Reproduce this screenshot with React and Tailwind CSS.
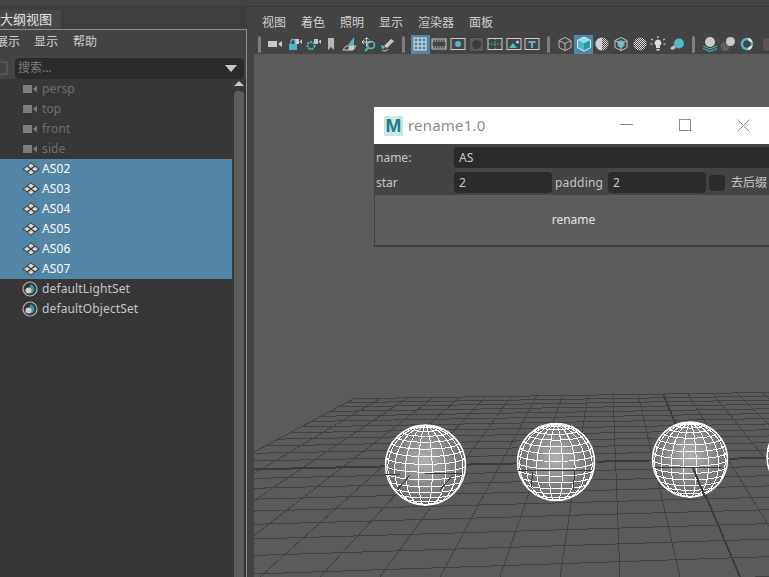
import React from "react";

const sans = "font-['Noto_Sans','Noto_Sans_CJK_SC',sans-serif]";

// perspective grid helpers, numbers read off the screenshot
const HZ = 263;
const VX = 608;
const FAR = 9478;
const rowH = (j) => 1 / (0.00504 - 0.000212 * j);
const crossing = (k, j) => {
  const a = (740 + 60 * k - VX) / (577 - HZ);
  const b = rowH(j) / (FAR - VX);
  const y = rowH(j) / (1 + a * b);
  return [VX + a * y, HZ + y];
};
const range = (from, to) => Array.from({ length: to - from + 1 }, (_, i) => from + i);

const Grid = () => {
  const cols = range(-12, 12);
  const rows = range(-12, 10);
  return (
    <g shapeRendering="crispEdges">
      {cols.map((k) => {
        const [x1, y1] = crossing(k, -12);
        const [x2, y2] = crossing(k, 10);
        return <line key={k} x1={x1} y1={y1} x2={x2} y2={y2} stroke={k === 0 ? "#3c3c3c" : "#424242"} strokeWidth={k === 0 ? 2 : 1} />;
      })}
      {rows.map((j) => {
        const [x1, y1] = crossing(-12, j);
        const [x2, y2] = crossing(12, j);
        return <line key={j} x1={x1} y1={y1} x2={x2} y2={y2} stroke={j === 0 ? "#3c3c3c" : "#424242"} strokeWidth={j === 0 ? 2 : 1} />;
      })}
    </g>
  );
};

const wirePath = (cx, cy, r) => {
  const tilt = 0.18;
  const pt = (lat, lon) => {
    const x = Math.cos(lat) * Math.sin(lon);
    const y = Math.sin(lat);
    const z = Math.cos(lat) * Math.cos(lon);
    return {
      sx: cx + r * x,
      sy: cy - r * (y * Math.cos(tilt) - z * Math.sin(tilt)),
      front: y * Math.sin(tilt) + z * Math.cos(tilt) >= -0.01,
    };
  };
  let d = "";
  const trace = (fn, steps) => {
    let pen = false;
    for (let i = 0; i <= steps; i++) {
      const p = fn(i / steps);
      if (!p.front) {
        pen = false;
        continue;
      }
      d += `${pen ? "L" : "M"}${p.sx.toFixed(1)} ${p.sy.toFixed(1)}`;
      pen = true;
    }
  };
  for (let a = -7; a <= 7; a++) {
    const lat = (a * Math.PI) / 16;
    trace((t) => pt(lat, t * Math.PI * 2), 72);
  }
  for (let b = 0; b < 18; b++) {
    const lon = (b * Math.PI) / 9 + 0.17;
    trace((t) => pt(-Math.PI / 2 + t * Math.PI, lon), 40);
  }
  return d;
};

const Sphere = ({ cx, cy, r }) => (
  <g>
    <circle cx={cx} cy={cy} r={r} fill="url(#sphereShade)" />
    <path d={wirePath(cx, cy, r)} fill="none" stroke="#fff" strokeWidth="1" shapeRendering="crispEdges" />
    <circle cx={cx} cy={cy} r={r} fill="none" stroke="#fff" strokeWidth="1.5" />
  </g>
);

const Viewport = () => (
  <svg className="w-full h-full block" viewBox="254 54 515 523">
    <defs>
      <radialGradient id="sphereShade" cx="50%" cy="45%" r="55%">
        <stop offset="0%" stopColor="#b2b2b2" />
        <stop offset="100%" stopColor="#666" />
      </radialGradient>
    </defs>
    <Grid />
    <Sphere cx={425.5} cy={465} r={40} />
    <Sphere cx={556} cy={462} r={38.5} />
    <Sphere cx={690} cy={459.5} r={37.5} />
    <Sphere cx={804} cy={457} r={37} />
    <g stroke="#3a3a3a" fill="none" shapeRendering="crispEdges">
      <path d="M385 474H400M425 474L463 473M410 475L397 490M453 475L440 490" />
      <path d="M518 471L593 470M533 472L531 487M575 470L573 490" />
      <path d="M655 468L723 467" />
      <path d="M693 468L705 497" strokeWidth="2" />
    </g>
  </svg>
);

const Icon = ({ children, box = 16 }) => (
  <svg width={box} height={box} viewBox="0 0 16 16">{children}</svg>
);

const teal = "#4fb8c8";
const light = "#c9c9c9";

const CamGlyph = ({ fill = light }) => <path d="M1 5h9v6H1zM11 8l4-3v6z" fill={fill} />;

const Tools = {
  cam: () => <Icon><CamGlyph /></Icon>,
  lock: () => (
    <Icon>
      <path d="M9 3h4v5H9zM13.500 5.500L16 3.500v4.500z" fill={light} />
      <path d="M3 8h8v6H3z" fill={teal} />
      <path d="M5 8V5.500a2 2 0 0 1 4 0V8" fill="none" stroke={teal} strokeWidth="1.300" />
    </Icon>
  ),
  film: () => (
    <Icon>
      <path d="M9 3h4v5H9zM13.500 5.500L16 3.500v4.500z" fill={light} />
      <circle cx="6" cy="9.500" r="3.500" fill="none" stroke={teal} strokeWidth="2" strokeDasharray="2 1" />
    </Icon>
  ),
  mark: () => <Icon><path d="M5 2h6v12l-3-3-3 3z" fill="#b5b5b5" /></Icon>,
  plane: () => (
    <Icon>
      <path d="M6 9L12 1v8z" fill={teal} />
      <path d="M1 14l3-4h10l-3 4z" fill="none" stroke={light} strokeWidth="1" />
      <path d="M7 10l5-1v5H6z" fill={light} />
    </Icon>
  ),
  pan: () => (
    <Icon>
      <circle cx="10" cy="9" r="3.500" fill="none" stroke={teal} strokeWidth="1.600" />
      <path d="M7.500 11.500L4 15" stroke={teal} strokeWidth="2" />
      <path d="M1 6h9M5.500 1.500v9M3 4L1 6l2 2M3.500 3.500l2-2 2 2" fill="none" stroke={light} strokeWidth="1" />
    </Icon>
  ),
  pencil: () => (
    <Icon>
      <path d="M5 10l7-7 3 2-7 7z" fill={light} />
      <path d="M2 9l3 1 1 2-3 1z" fill={teal} />
      <path d="M3 14a4 4 0 0 0 6-1" fill="none" stroke={light} strokeWidth="1" />
    </Icon>
  ),
  grid: () => (
    <Icon>
      <rect x="2" y="2" width="12" height="12" fill="none" stroke="#e6e6e6" />
      <path d="M6 2v12M10 2v12M2 6h12M2 10h12" stroke="#e6e6e6" strokeWidth="1" />
    </Icon>
  ),
  gate: () => (
    <Icon>
      <rect x="1" y="3" width="14" height="10" fill="none" stroke={light} />
      <path d="M1 5h14M1 11h14" stroke={light} strokeDasharray="1.500 1" />
    </Icon>
  ),
  dot: () => (
    <Icon>
      <rect x="1" y="2.500" width="14" height="11" fill="none" stroke={light} />
      <circle cx="8" cy="8" r="3" fill={teal} />
    </Icon>
  ),
  dark: () => (
    <div className="w-[15px] h-[15px] bg-[#5a5a5a] border border-[#3c3c3c] flex items-center justify-center">
      <div className="w-[9px] h-[9px] rounded-full bg-[#3a3a3a]" />
    </div>
  ),
  safe: () => (
    <Icon>
      <rect x="1" y="2.500" width="14" height="11" fill="none" stroke={light} />
      <path d="M1 8h14M8 2.500v11" stroke={teal} strokeDasharray="1.500 1.500" />
    </Icon>
  ),
  pic: () => (
    <Icon>
      <rect x="1" y="2.500" width="14" height="11" fill="none" stroke={light} />
      <path d="M3 12l4-5 4 5z" fill={teal} />
      <circle cx="11.500" cy="6" r="1.500" fill={light} />
    </Icon>
  ),
  text: () => (
    <Icon>
      <rect x="1" y="2.500" width="14" height="11" fill="none" stroke={light} />
      <path d="M4.500 5h7v2h-2.500v5h-2v-5H4.500z" fill={teal} />
    </Icon>
  ),
  cube: () => (
    <Icon>
      <path d="M8 1.500l6 3v7l-6 3-6-3v-7zM2 4.500l6 3 6-3M8 7.500v7" fill="none" stroke="#b8b8b8" />
    </Icon>
  ),
  solid: () => (
    <Icon>
      <path d="M8 1l6.500 3.200L8 7.500 1.500 4.200z" fill="#8adfe8" />
      <path d="M1.500 4.200L8 7.500V15L1.500 11.800z" fill="#4fb8c8" />
      <path d="M14.500 4.200L8 7.500V15l6.500-3.200z" fill="#2f98aa" />
      <path d="M8 1l6.500 3.200v7.600L8 15l-6.500-3.200V4.200z" fill="none" stroke="#d5eef2" />
    </Icon>
  ),
  half: () => (
    <Icon>
      <defs>
        <pattern id="chk" width="2" height="2" patternUnits="userSpaceOnUse">
          <rect width="2" height="2" fill="#444" />
          <rect width="1" height="1" fill="#ddd" />
          <rect x="1" y="1" width="1" height="1" fill="#ddd" />
        </pattern>
      </defs>
      <circle cx="8" cy="8" r="6.500" fill="url(#chk)" />
      <path d="M8 1.500a6.500 6.500 0 0 0 0 13z" fill="#cfcfcf" />
    </Icon>
  ),
  tcube: () => (
    <Icon>
      <path d="M8 1.500l6 3v7l-6 3-6-3v-7z" fill="none" stroke="#c5c5c5" />
      <path d="M8 4l3.500 1.800v4.400L8 12l-3.500-1.800V5.800z" fill={teal} />
      <path d="M2 4.500l6 3 6-3M8 7.500v7" fill="none" stroke="#c5c5c5" />
    </Icon>
  ),
  checker: () => (
    <Icon>
      <circle cx="8" cy="8" r="6.500" fill="url(#chk)" />
    </Icon>
  ),
  bulb: () => (
    <Icon>
      <path d="M8 3.500a3.500 3.500 0 0 1 2 6.300V12H6V9.800a3.500 3.500 0 0 1 2-6.300zM6.500 13h3v1.500h-3z" fill="#dedede" />
      <path d="M8 0v2M1 3l2 1M15 3l-2 1M0.500 8h2M13.500 8h2" stroke="#dedede" />
    </Icon>
  ),
  lit: () => (
    <Icon>
      <circle cx="10" cy="7.500" r="5" fill={teal} />
      <path d="M1 12l4-3 2 3-4 2z" fill="#bdbdbd" />
    </Icon>
  ),
  layered: () => (
    <Icon>
      <circle cx="8" cy="6" r="5" fill="#c9c9c9" />
      <path d="M1 10l7 3 7-3M1 12.500l7 3 7-3" fill="none" stroke={teal} />
    </Icon>
  ),
  pair: () => (
    <Icon>
      <circle cx="5" cy="10.500" r="4.500" fill="#5f5f5f" />
      <circle cx="10.500" cy="5.500" r="4.500" fill="#c9c9c9" />
    </Icon>
  ),
  ring: () => (
    <Icon>
      <circle cx="8" cy="8" r="5" fill="none" stroke={teal} strokeWidth="2.400" />
      <path d="M9 3a5 5 0 0 1 3.500 3M12.500 10a5 5 0 0 1-3.500 3" fill="none" stroke="#e5e5e5" strokeWidth="2.400" />
    </Icon>
  ),
};

const Handle = () => (
  <div className="w-[14px] shrink-0 flex justify-center">
    <div className="w-[3px] h-[17px] rounded-sm bg-[#7d7d7d]" />
  </div>
);

const Slot = ({ name, active }) => {
  const Glyph = Tools[name];
  return (
    <div className={`w-[18.700px] h-[19px] shrink-0 flex items-center justify-center ${active ? "bg-[#5285a6]" : ""}`}>
      <Glyph />
    </div>
  );
};

const CubeSet = () => (
  <svg width="18" height="14" viewBox="0 0 18 14">
    <path d="M9 .5L17.500 7 9 13.500.5 7z" fill="#3a3a3a" />
    <path d="M9 1.500l3 2.300-3 2.500-3-2.500zM5 4.700L8 7 5 9.300 2 7zM13 4.700L16 7l-3 2.300L10 7zM9 7.700l3 2.500-3 2.300-3-2.300z" fill="#d4d4d4" />
  </svg>
);

const SetIcon = () => (
  <svg width="16" height="16" viewBox="0 0 16 16">
    <circle cx="8" cy="8" r="7" fill="none" stroke="#b5b5b5" strokeWidth="1.200" />
    <path d="M8 3.500a4.500 4.500 0 0 1 0 9z" fill="#2f98aa" />
    <circle cx="6.500" cy="9.500" r="3" fill="#cfcfcf" />
  </svg>
);

const CamIcon = () => (
  <svg width="16" height="12" viewBox="0 0 16 12">
    <path d="M1 2h9v8H1zM11 6l4-3.500v7z" fill="#7d7d7d" />
  </svg>
);

const Row = ({ icon, label, selected, dim }) => (
  <div className={`h-5 flex items-center text-[12px] tracking-[0.13px] ${selected ? "bg-[#5285a6] text-white" : dim ? "text-[#6e6e6e]" : "text-[#c4c4c4]"}`}>
    <div className="w-[22px] shrink-0" />
    <div className="w-[20px] shrink-0 flex justify-start">{icon}</div>
    <span>{label}</span>
  </div>
);

const Outliner = () => (
  <div className="w-[247px] shrink-0 flex flex-col h-full">
    <div className="h-[22px] pt-[3px] bg-[#3e3e3e] flex">
      <div className="w-[61px] bg-[#484848] text-[13px] leading-[19px] text-[#e0e0e0] whitespace-nowrap overflow-hidden">大纲视图</div>
    </div>
    <div className="flex-1 border-t border-r border-[#8c8c8c] flex flex-col min-h-0">
      <div className="h-[27px] pb-[4px] flex items-center text-[12px] text-[#cfcfcf] bg-[#444]">
        <span className="-ml-[4px] w-[38px]">展示</span>
        <span className="w-[39px]">显示</span>
        <span>帮助</span>
      </div>
      <div className="h-[22px] flex items-center bg-[#444] pr-[2px]">
        <div className="w-[15px] shrink-0 h-full flex items-center">
          <div className="w-[8px] h-[14px] border-y-2 border-r-2 border-[#555]" />
        </div>
        <div className="flex-1 h-[21px] rounded-sm bg-[#2b2b2b] flex items-center justify-between px-[3px] pr-[7px]">
          <span className="text-[12px] text-[#7d7d7d]">搜索...</span>
          <div className="w-0 h-0 border-x-[6px] border-x-transparent border-t-[7px] border-t-[#c8c8c8]" />
        </div>
      </div>
      <div className="flex-1 flex bg-[#373737] min-h-0">
        <div className="w-[232px] shrink-0">
          {["persp", "top", "front", "side"].map((n) => (
            <Row key={n} label={n} dim icon={<CamIcon />} />
          ))}
          {["AS02", "AS03", "AS04", "AS05", "AS06", "AS07"].map((n) => (
            <Row key={n} label={n} selected icon={<CubeSet />} />
          ))}
          {["defaultLightSet", "defaultObjectSet"].map((n) => (
            <Row key={n} label={n} icon={<SetIcon />} />
          ))}
        </div>
        <div className="ml-[2px] w-[10px] flex flex-col items-center">
          <div className="mt-[2px] mb-[5px] w-0 h-0 border-x-[5px] border-x-transparent border-b-[5px] border-b-[#c8c8c8]" />
          <div className="flex-1 w-[10px] rounded-t bg-[#5d5d5d]" />
        </div>
      </div>
    </div>
  </div>
);

const toolsA = ["cam", "lock", "film", "mark", "plane", "pan", "pencil"];
const toolsB = ["grid", "gate", "dot", "dark", "safe", "pic", "text"];
const toolsC = ["cube", "solid", "half", "tcube", "checker", "bulb", "lit"];
const toolsD = ["layered", "pair", "ring"];

const Panel = () => (
  <div className="flex-1 min-w-0 flex flex-col h-full ml-[3px]">
    <div className="h-[27px] pt-[5px] flex items-center text-[12px] text-[#cfcfcf] pl-[12px] gap-[15px] whitespace-nowrap">
      <span>视图</span>
      <span>着色</span>
      <span>照明</span>
      <span>显示</span>
      <span>渲染器</span>
      <span>面板</span>
    </div>
    <div className="h-[20px] flex items-center pl-[2px] overflow-hidden">
      <Handle />
      {toolsA.map((n) => <Slot key={n} name={n} />)}
      <Handle />
      {toolsB.map((n) => <Slot key={n} name={n} active={n === "grid"} />)}
      <Handle />
      {toolsC.map((n) => <Slot key={n} name={n} active={n === "solid"} />)}
      <Handle />
      {toolsD.map((n) => <Slot key={n} name={n} />)}
      <div className="w-[14px] h-[15px] ml-[5px] shrink-0 bg-[#555] border border-[#3c3c3c]" />
    </div>
    <div className="flex-1 min-h-0 pl-[4px]">
      <div className="w-full h-full bg-[#5b5b5b]">
        <Viewport />
      </div>
    </div>
  </div>
);

const Field = ({ className, children }) => (
  <div className={`h-[21px] rounded-sm bg-[#2b2b2b] text-[#c8c8c8] text-[12px] leading-[21px] px-[5px] ${className}`}>{children}</div>
);

const RenameWindow = () => (
  <div className="absolute left-[374px] top-[107px] w-[440px] bg-[#444] text-[12px] text-[#c4c4c4]">
    <div className="h-[37px] bg-white flex items-center pl-[10px]">
      <div className="w-[19px] h-[20px] bg-[#cfe6e8] flex items-center justify-center overflow-hidden">
        <span className="text-[19px] leading-none font-bold text-[#157f8c] font-['Liberation_Sans',sans-serif]">M</span>
      </div>
      <span className="ml-[5px] text-[15px] tracking-[0.2px] text-[#8c8c8c]">rename1.0</span>
      <div className="absolute left-[246px] top-[17px] w-[13px] h-px bg-[#8c8c8c]" />
      <div className="absolute left-[305px] top-[12px] w-[12px] h-[12px] border border-[#8c8c8c]" />
      <svg className="absolute left-[363px] top-[12px]" width="13" height="13" viewBox="0 0 13 13">
        <path d="M.5.500l12 12M12.500.500l-12 12" stroke="#8c8c8c" fill="none" />
      </svg>
    </div>
    <div className="flex items-center h-[21px] mt-[3px]">
      <span className="w-[80px] pl-[2px] shrink-0">name:</span>
      <Field className="flex-1">AS</Field>
    </div>
    <div className="flex items-center h-[21px] mt-[4px]">
      <span className="w-[80px] pl-[2px] shrink-0">star</span>
      <Field className="w-[98px]">2</Field>
      <span className="w-[56px] pl-[3px] shrink-0 tracking-[0.2px]">padding</span>
      <Field className="w-[98px]">2</Field>
      <div className="ml-[3px] w-[16px] h-[16px] rounded-sm bg-[#2b2b2b]" />
      <span className="ml-[6px]">去后缀</span>
    </div>
    <div className="h-[51px] mt-[2px] ml-px mb-px bg-[#5d5d5d] border-b border-[#3a3a3a] pr-[40px] flex items-center justify-center text-[#e2e2e2]">
      <span className="mr-[2px]">rename</span>
    </div>
  </div>
);

export default function App() {
  return (
    <div className={`relative w-[769px] h-[577px] overflow-hidden bg-[#444] ${sans}`}>
      <div className="h-[7px] bg-[#444] border-b border-[#3a3a3a]" />
      <div className="flex h-[570px]">
        <Outliner />
        <Panel />
      </div>
      <RenameWindow />
    </div>
  );
}
